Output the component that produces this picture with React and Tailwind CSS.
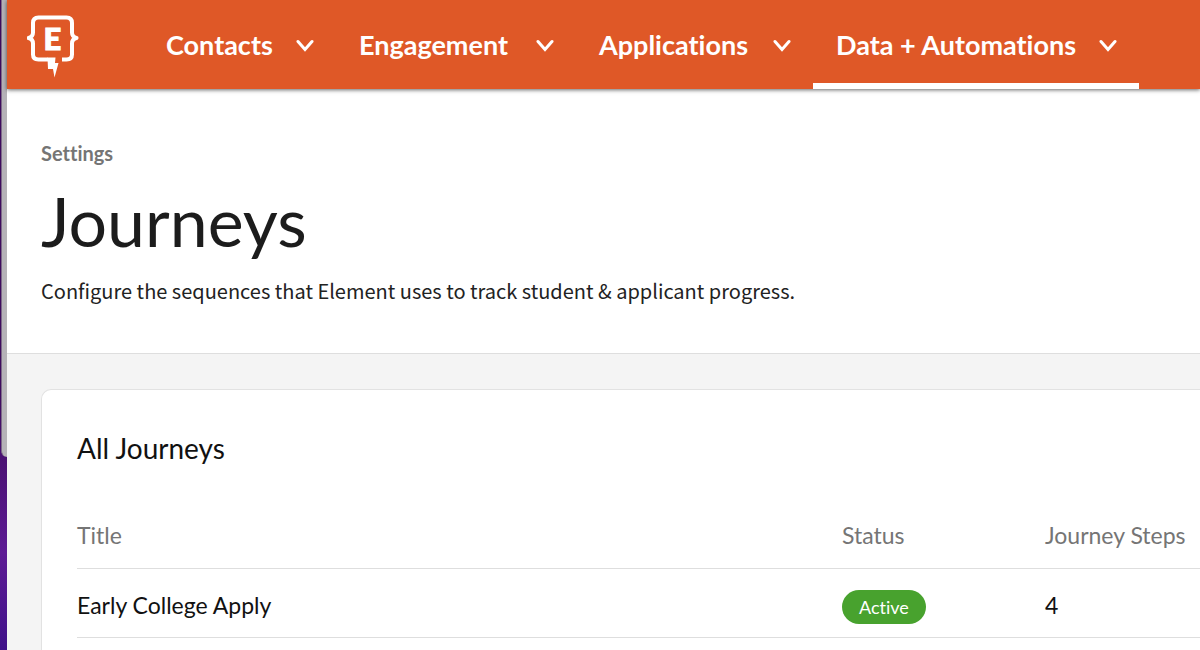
const navItems = [
  { label: 'Contacts', width: 'w-[193px]' },
  { label: 'Engagement', width: 'w-[240px]' },
  { label: 'Applications', width: 'w-[237px]' },
  { label: 'Data + Automations', width: 'w-[326px]', active: true },
]

const journeys = [{ title: 'Early College Apply', status: 'Active', steps: 4 }]

function Logo() {
  return (
    <svg viewBox="0 0 52 64" className="h-16 w-[52px]" role="img" aria-label="Element">
      <path
        d="M21 45.500H11.500Q6 45.500 6 40.500V29.500Q6 25 1.500 24Q6 23 6 18.500V9Q6 3.500 11.500 3.500H39.500Q45 3.500 45 9V18.500Q45 23 49.500 24Q45 25 45 29.500V40.500Q45 45.500 39.500 45.500H35"
        fill="none"
        stroke="white"
        strokeWidth="4"
        strokeLinejoin="round"
      />
      <path d="M20.500 43.500H28.500L28 49H31.500L27.500 63.500L26 55H21Z" fill="white" />
      <text
        x="25.500"
        y="35.500"
        textAnchor="middle"
        fill="white"
        stroke="white"
        strokeWidth="1"
        fontFamily="Lato, sans-serif"
        fontWeight="900"
        fontSize="31"
      >
        E
      </text>
    </svg>
  )
}

function Chevron() {
  return (
    <svg viewBox="0 0 18 14" className="h-[14px] w-[18px] shrink-0" aria-hidden="true">
      <path
        d="M2 2.500L9 10.500L16 2.500"
        fill="none"
        stroke="white"
        strokeWidth="3"
        strokeLinecap="round"
      />
    </svg>
  )
}

function Header() {
  return (
    <header className="relative flex h-[89px] bg-[#df5827] pl-5 shadow-[0_1px_4px_rgba(0,0,0,0.6)]">
      <a href="#home" className="mr-16 pt-[14px]">
        <Logo />
      </a>
      <nav className="flex">
        {navItems.map((item) => (
          <button
            key={item.label}
            className={`flex items-center justify-between whitespace-nowrap border-b-[6px] pl-[23px] pr-[22px] pt-2 text-[27px] font-bold text-white ${item.width} ${
              item.active ? 'border-white' : 'border-transparent'
            }`}
          >
            {item.label}
            <Chevron />
          </button>
        ))}
      </nav>
    </header>
  )
}

function JourneysTable() {
  return (
    <table className="w-full table-fixed text-left text-[23px] leading-8">
      <thead>
        <tr className="h-[66px] border-b border-[#dedede] text-[#757575]">
          <th className="font-normal">Title</th>
          <th className="w-[203px] font-normal">Status</th>
          <th className="w-[155px] whitespace-nowrap font-normal">Journey Steps</th>
        </tr>
      </thead>
      <tbody>
        {journeys.map((journey) => (
          <tr key={journey.title} className="h-[69px] border-b border-[#dedede] text-[#111]">
            <td className="pt-1">{journey.title}</td>
            <td className="pt-1">
              <span className="mt-1 inline-flex h-[34px] items-center rounded-full bg-[#48a22e] px-[17px] align-middle text-[18px] text-white">
                {journey.status}
              </span>
            </td>
            <td className="pt-1">{journey.steps}</td>
          </tr>
        ))}
      </tbody>
    </table>
  )
}

function App() {
  return (
    <div className="flex min-h-screen overflow-hidden bg-[#f4f4f4] font-['Lato',sans-serif] [font-variant-ligatures:none]">
      {/* desktop and the window behind, showing past the left edge */}
      <div className="w-[7px] shrink-0 bg-linear-to-b from-[#3d0a5c] from-60% via-[#5d1a94] via-85% to-[#3f1089]">
        <div className="ml-px h-[457px] rounded-bl-[10px] border-l border-[#7d6a88] bg-[#b5b2b7]" />
      </div>

      <div className="flex min-w-0 flex-1 flex-col">
        <Header />

        <section className="border-b border-[#dedede] bg-white pb-[46px] pl-[34px] pt-[52px]">
          <a href="#settings" className="block text-[20px] font-bold leading-6 text-[#757575]">
            Settings
          </a>
          <h1 className="mt-3 text-[68px] leading-[88px] text-[#1c1c1c]">Journeys</h1>
          <p className="mt-[10px] font-['Noto_Sans_CJK_SC',sans-serif] text-[20px] leading-8 text-[#222]">
            Configure the sequences that Element uses to track student &amp; applicant progress.
          </p>
        </section>

        <main className="flex flex-1 flex-col pl-[34px] pt-[35px]">
          <div className="flex-1 rounded-tl-[10px] border-l border-t border-[#e2e2e2] bg-white pl-[35px]">
            <h2 className="pb-9 pt-10 text-[28px] leading-9 text-[#111]">All Journeys</h2>
            <JourneysTable />
          </div>
        </main>
      </div>
    </div>
  )
}

export default App
